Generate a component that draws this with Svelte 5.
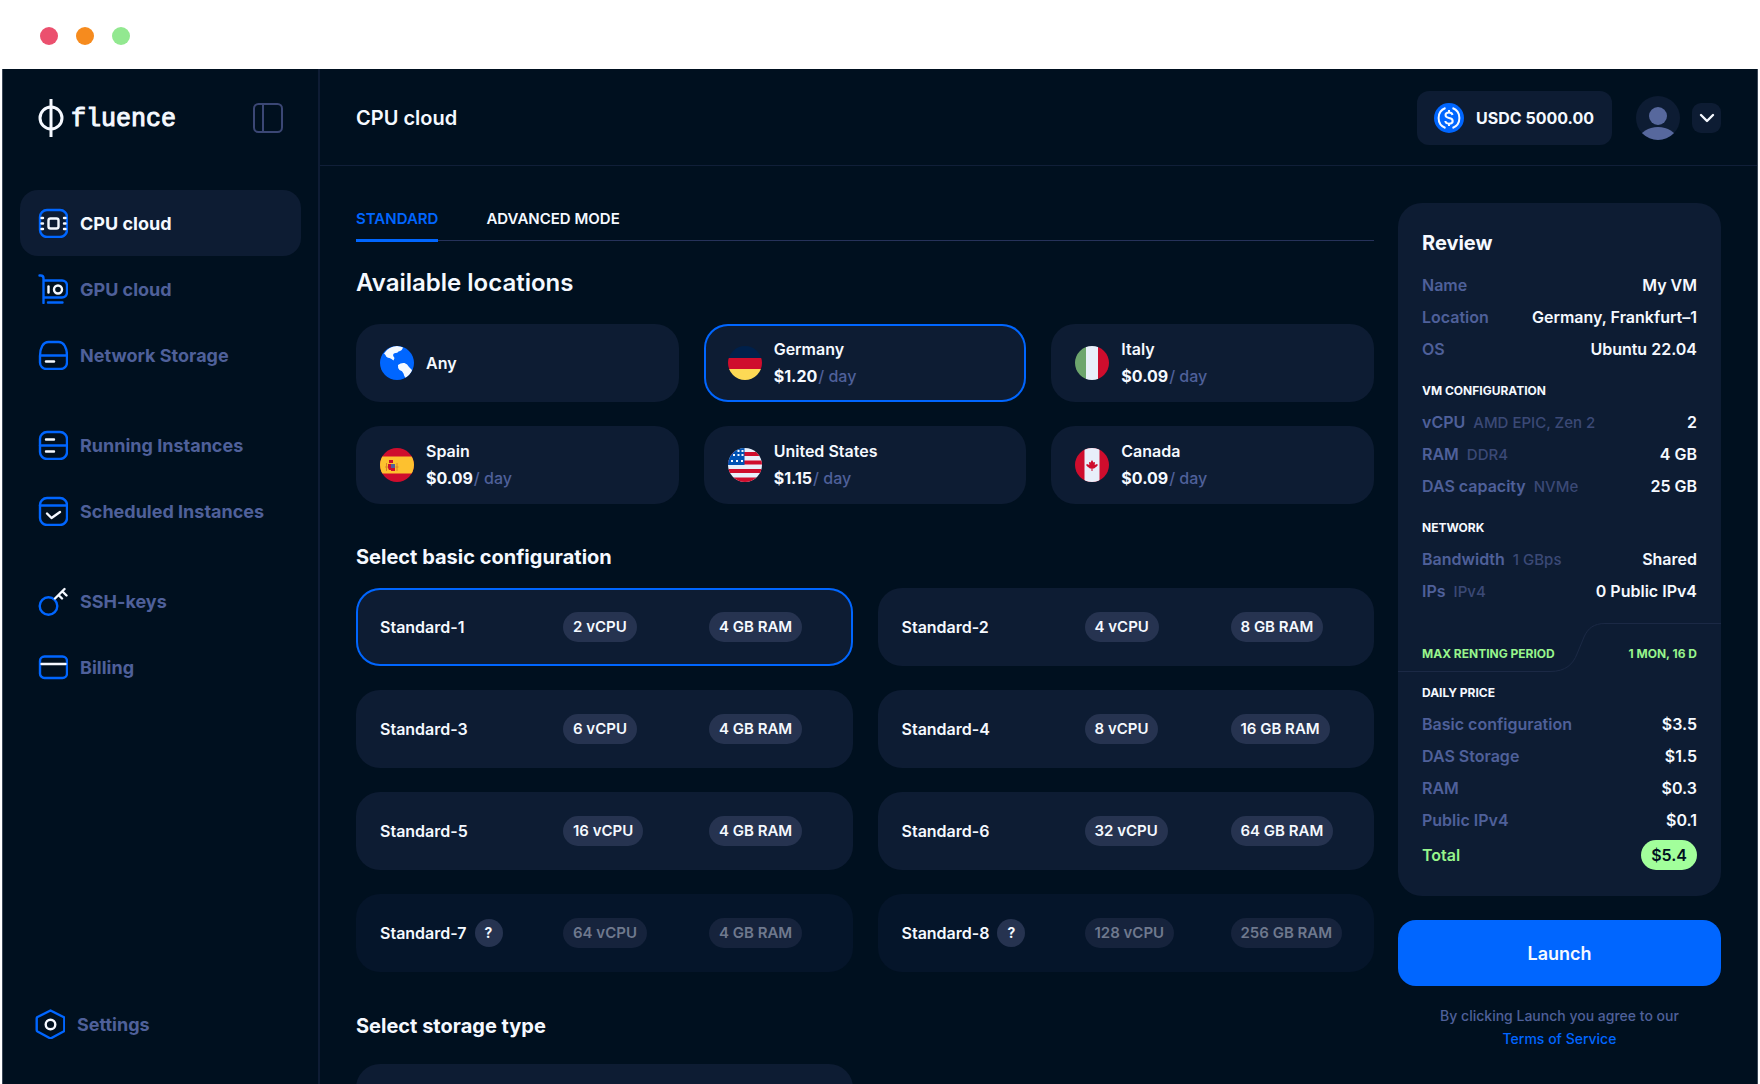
<script>
  const navGroups = [
    [
      { id: "cpu", label: "CPU cloud" },
      { id: "gpu", label: "GPU cloud" },
      { id: "storage", label: "Network Storage" }
    ],
    [
      { id: "running", label: "Running Instances" },
      { id: "scheduled", label: "Scheduled Instances" }
    ],
    [
      { id: "ssh", label: "SSH-keys" },
      { id: "billing", label: "Billing" }
    ]
  ];

  const tabs = ["STANDARD", "ADVANCED MODE"];

  const locations = [
    { id: "any", name: "Any" },
    { id: "de", name: "Germany", price: "$1.20" },
    { id: "it", name: "Italy", price: "$0.09" },
    { id: "es", name: "Spain", price: "$0.09" },
    { id: "us", name: "United States", price: "$1.15" },
    { id: "ca", name: "Canada", price: "$0.09" }
  ];

  const configs = [
    { name: "Standard-1", cpu: "2 vCPU", ram: "4 GB RAM" },
    { name: "Standard-2", cpu: "4 vCPU", ram: "8 GB RAM" },
    { name: "Standard-3", cpu: "6 vCPU", ram: "4 GB RAM" },
    { name: "Standard-4", cpu: "8 vCPU", ram: "16 GB RAM" },
    { name: "Standard-5", cpu: "16 vCPU", ram: "4 GB RAM" },
    { name: "Standard-6", cpu: "32 vCPU", ram: "64 GB RAM" },
    { name: "Standard-7", cpu: "64 vCPU", ram: "4 GB RAM", disabled: true },
    { name: "Standard-8", cpu: "128 vCPU", ram: "256 GB RAM", disabled: true }
  ];

  const general = [
    { label: "Name", value: "My VM" },
    { label: "Location", value: "Germany, Frankfurt–1" },
    { label: "OS", value: "Ubuntu 22.04" }
  ];

  const vm = [
    { label: "vCPU", note: "AMD EPIC, Zen 2", value: "2" },
    { label: "RAM", note: "DDR4", value: "4 GB" },
    { label: "DAS capacity", note: "NVMe", value: "25 GB" }
  ];

  const network = [
    { label: "Bandwidth", note: "1 GBps", value: "Shared" },
    { label: "IPs", note: "IPv4", value: "0 Public IPv4" }
  ];

  const prices = [
    { label: "Basic configuration", value: "$3.5" },
    { label: "DAS Storage", value: "$1.5" },
    { label: "RAM", value: "$0.3" },
    { label: "Public IPv4", value: "$0.1" }
  ];

  let page = $state("cpu");
  let tab = $state("STANDARD");
  let location = $state("de");
  let config = $state("Standard-1");
</script>

{#snippet navIcon(id)}
  <svg class="nav-icon" viewBox="0 0 30 30" aria-hidden="true">
    {#if id === "cpu"}
      <rect class="b" x="2" y="2" width="27" height="27" rx="7" />
      <rect class="w" x="10.5" y="10.5" width="10" height="10" rx="2" />
      <path class="w" d="M3.5 10H5M3.5 15.5H5M3.5 21H5M26 10h1.5M26 15.5h1.5M26 21h1.5" />
    {:else if id === "gpu"}
      <path class="b" d="M1.5 1.5h1.2a2.8 2.8 0 0 1 2.8 2.8V29M5.5 6.5H24a5 5 0 0 1 5 5v7a5 5 0 0 1-5 5H5.5M10 28.5h14.5" />
      <path class="w" d="M10.5 12.5v6" />
      <circle class="w" cx="20" cy="15.5" r="4" />
    {:else if id === "storage"}
      <path class="b" d="M2 16C2 8 5 2 10.5 2h10C26 2 29 8 29 16v6.5a6.5 6.5 0 0 1-6.5 6.5h-14A6.5 6.5 0 0 1 2 22.5zM2 15.5h27" />
      <path class="w" d="M8 21.5h8" />
    {:else if id === "running"}
      <rect class="b" x="2" y="2" width="27" height="27" rx="7" />
      <path class="b" d="M2 15.5h27" />
      <path class="w" d="M8 9.5h8M8 21.5h8" />
    {:else if id === "scheduled"}
      <rect class="b" x="2" y="2" width="27" height="27" rx="7" />
      <path class="b" d="M2 9.5h27" />
      <path class="w" d="m9 17.5 4.5 4.5 8.5-6" />
    {:else if id === "ssh"}
      <circle class="b" cx="10.5" cy="20" r="8.8" />
      <path class="w" d="M17 12.5 26.5 3M20.5 9l3.5 3.5M24.500 5.5l4 4" />
    {:else if id === "billing"}
      <rect class="b" x="2" y="4.5" width="27" height="21.5" rx="4.5" />
      <path class="w" d="M3.5 12h24" />
    {:else}
      <path class="b" d="M15.5 1.5 28.500 8q.8.5.8 1.5v11.5q0 1-.8 1.5l-13 7-13-7q-.8-.5-.8-1.5V9.5q0-1 .8-1.5z" />
      <circle class="w" cx="15.5" cy="15.5" r="4.8" />
    {/if}
  </svg>
{/snippet}

{#snippet flag(id)}
  <svg class="flag" viewBox="0 0 34 34" aria-hidden="true">
    <clipPath id="round-{id}"><circle cx="17" cy="17" r="17" /></clipPath>
    <g clip-path="url(#round-{id})">
      {#if id === "any"}
        <path fill="#0066ff" d="M0 0h34v34H0z" />
        <path fill="#f5f9ff" d="M4 7.5Q9 0 17 0q4 .3 6 1.500-1 3.500-4.500 4-1 1.500-3 1.500-2 0-2.500 2 .5 2 1.500 3l-1 2.500q-2-2-4-2.500-3.500-.5-4-3zM18 19q3-2.500 6.500-2 3 1 4.500 4l3 3q0 3-6 8.500-2-2-2.500-5-1-3-4-3.500-2-2-1.500-5z" />
      {:else if id === "de"}
        <path fill="#00204a" d="M0 0h34v12H0z" />
        <path fill="#cf0d2d" d="M0 12h34v11H0z" />
        <path fill="#fdd955" d="M0 23h34v11H0z" />
      {:else if id === "it"}
        <path fill="#6da56d" d="M0 0h11v34H0z" />
        <path fill="#e8effa" d="M11 0h12v34H11z" />
        <path fill="#cf0d2d" d="M23 0h11v34H23z" />
      {:else if id === "es"}
        <path fill="#cf0d2d" d="M0 0h34v34H0z" />
        <path fill="#fdc12f" d="M0 8.500h34v17H0z" />
        <path fill="#cf0d2d" d="M9 12h4v3H9zM8 16h3v6H9l-1-2zM11 20h4v3h-4z" />
        <path fill="#54619b" d="M11 16h4v4h-4z" />
        <path stroke="#d9822b" fill="none" d="M6.500 15v8M17 15v8M5 19h3M15.500 19h3" />
      {:else if id === "us"}
        <path fill="#e8effa" d="M0 0h34v34H0z" />
        <path fill="#cf0d2d" d="M0 4h34v4H0zM0 12.500h34v4H0zM0 21h34v4H0zM0 29.500h34V34H0z" />
        <path fill="#0052b4" d="M0 0h16.500v17H0z" />
        <path fill="#f5f9ff" d="M5 6h2v2H5zM9.500 6h2v2h-2zM13.500 6h2v2h-2zM9.500 2h2v2h-2zM13.500 2h2v2h-2zM3 12h2v2H3zM8 12h2v2H8zM13 12h2v2h-2z" />
      {:else if id === "ca"}
        <path fill="#cf0d2d" d="M0 0h34v34H0z" />
        <path fill="#e8effa" d="M9.500 0h15v34h-15z" />
        <path fill="#cf0d2d" d="m17 12 1.500 2.500 1.500-.5-.3 3 2.300-1 .8.800-.5 1.200-3.300 2.500H17.500V23h-1v-2.500H15L11.700 18l-.5-1.200.8-.8 2.300 1-.3-3 1.500.5z" />
      {/if}
    </g>
  </svg>
{/snippet}

{#snippet rows(items)}
  <dl>
    {#each items as item}
      <div class="row">
        <dt>{item.label}{#if item.note}<span class="note">{item.note}</span>{/if}</dt>
        <dd>{item.value}</dd>
      </div>
    {/each}
  </dl>
{/snippet}

<div class="window">
  <div class="titlebar">
    <span class="dot red"></span>
    <span class="dot orange"></span>
    <span class="dot green"></span>
  </div>

  <div class="app">
    <aside>
      <div class="brand">
        <a class="logo" href="#home">
          <svg viewBox="0 0 26 38" aria-hidden="true">
            <circle cx="13" cy="19" r="11" />
            <path d="M13 0v38" />
          </svg>
          <span>fluence</span>
        </a>
        <button class="collapse" aria-label="Toggle sidebar">
          <svg viewBox="0 0 30 30" aria-hidden="true">
            <rect x="1" y="1" width="28" height="28" rx="4.5" />
            <path d="M10 1v28" />
          </svg>
        </button>
      </div>

      <nav>
        {#each navGroups as group}
          <ul>
            {#each group as item}
              <li>
                <a
                  class="nav-item"
                  class:active={page === item.id}
                  href="#{item.id}"
                  onclick={() => (page = item.id)}
                >
                  {@render navIcon(item.id)}
                  {item.label}
                </a>
              </li>
            {/each}
          </ul>
        {/each}
      </nav>

      <a class="nav-item settings" href="#settings">
        {@render navIcon("settings")}
        Settings
      </a>
    </aside>

    <div class="page">
      <header>
        <h1>CPU cloud</h1>
        <div class="balance">
          <svg viewBox="0 0 30 30" aria-hidden="true">
            <circle cx="15" cy="15" r="15" fill="#0066ff" />
            <path d="M11.5 5A10.7 10.7 0 0 0 11.5 25M18.5 5A10.7 10.7 0 0 1 18.5 25" />
            <path d="M18.5 12Q18 9.5 15 9.5q-3.5 0-3.500 2.600 0 2.200 3.500 2.800 3.700.6 3.700 3 0 2.800-3.700 2.800-3.400 0-3.700-2.700M15 7v2.500M15 20.500V23" />
          </svg>
          <span>USDC 5000.00</span>
        </div>
        <svg class="avatar" viewBox="0 0 44 44" aria-hidden="true">
          <clipPath id="avatar-clip"><circle cx="22" cy="22" r="22" /></clipPath>
          <circle cx="22" cy="22" r="22" fill="#0d1c33" />
          <circle cx="22" cy="20" r="9" fill="#57689d" />
          <ellipse cx="22" cy="43" rx="18" ry="12" fill="#57689d" clip-path="url(#avatar-clip)" />
        </svg>
        <button class="menu" aria-label="Account menu">
          <svg viewBox="0 0 16 16" aria-hidden="true"><path d="m2 5 6 6 6-6" /></svg>
        </button>
      </header>

      <div class="content">
        <main>
          <div class="tabs">
            {#each tabs as name}
              <button class:active={tab === name} onclick={() => (tab = name)}>{name}</button>
            {/each}
          </div>

          <h2>Available locations</h2>
          <div class="locations">
            {#each locations as item}
              <button
                class="card"
                class:selected={location === item.id}
                onclick={() => (location = item.id)}
              >
                {@render flag(item.id)}
                <span class="place">
                  <span>{item.name}</span>
                  {#if item.price}
                    <span class="price"><b>{item.price}</b>/ day</span>
                  {/if}
                </span>
              </button>
            {/each}
          </div>

          <h3>Select basic configuration</h3>
          <div class="configs">
            {#each configs as item}
              <button
                class="card config"
                class:selected={config === item.name}
                disabled={item.disabled}
                onclick={() => (config = item.name)}
              >
                <span class="name">
                  {item.name}
                  {#if item.disabled}<span class="help">?</span>{/if}
                </span>
                <span><span class="pill">{item.cpu}</span></span>
                <span><span class="pill">{item.ram}</span></span>
              </button>
            {/each}
          </div>

          <h3>Select storage type</h3>
          <div class="configs storage">
            <div class="card"></div>
          </div>
        </main>

        <section class="side">
          <div class="review">
            <h3>Review</h3>
            {@render rows(general)}
            <h4>VM CONFIGURATION</h4>
            {@render rows(vm)}
            <h4>NETWORK</h4>
            {@render rows(network)}

            <div class="period">
              <svg viewBox="0 0 323 50" preserveAspectRatio="none" aria-hidden="true">
                <path d="M0 48.5H152C168 48.5 175 41 179 31L186 14C190 5 196 .5 207 .5H323" />
              </svg>
              <span>MAX RENTING PERIOD</span>
              <span>1 MON, 16 D</span>
            </div>

            <h4 class="daily">DAILY PRICE</h4>
            {@render rows(prices)}
            <div class="total">
              <span>Total</span>
              <span class="sum">$5.4</span>
            </div>
          </div>

          <button class="launch">Launch</button>
          <p class="terms">
            By clicking Launch you agree to our<br />
            <a href="#terms">Terms of Service</a>
          </p>
        </section>
      </div>
    </div>
  </div>
</div>

<style>
  :global(body) {
    margin: 0;
    background: #fff;
    font-family: Inter, "Open Sans", sans-serif;
    font-weight: 600;
    color: #f5f9ff;
  }

  .window,
  .window :global(*) {
    box-sizing: border-box;
  }

  .window {
    height: 100vh;
    display: flex;
    flex-direction: column;
    overflow: hidden;
  }

  button {
    border: none;
    padding: 0;
    background: none;
    color: inherit;
    font: inherit;
    cursor: pointer;
  }

  a {
    color: inherit;
    text-decoration: none;
  }

  h1,
  h2,
  h3,
  h4,
  p,
  ul,
  dl,
  dd {
    margin: 0;
    padding: 0;
    font-weight: 600;
  }

  svg {
    display: block;
    flex: none;
    fill: none;
  }

  .titlebar {
    flex: none;
    height: 69px;
    display: flex;
    align-items: center;
    gap: 18px;
    padding: 2px 40px 0;
  }

  .dot {
    width: 18px;
    height: 18px;
    border-radius: 50%;
  }

  .red {
    background: #eb506e;
  }

  .orange {
    background: #f68b1e;
  }

  .green {
    background: #92e890;
  }

  .app {
    flex: 1;
    min-height: 0;
    display: flex;
    margin: 0 2px;
    border: solid #3c4858;
    border-width: 0 1px;
    background: #00101f;
  }

  /* sidebar */
  aside {
    flex: none;
    width: 317px;
    display: flex;
    flex-direction: column;
    padding: 0 17px 27px;
    border-right: 2px solid #0e1c34;
  }

  .brand {
    height: 97px;
    display: flex;
    align-items: center;
    justify-content: space-between;
    padding: 0 18px;
  }

  .logo {
    display: flex;
    align-items: center;
    gap: 7px;
    font: 25px/30px "Liberation Mono", monospace;
    -webkit-text-stroke: 1px #f5f9ff;
  }

  .logo span {
    padding-top: 4px;
  }

  .logo svg {
    width: 26px;
    height: 38px;
    stroke: #f5f9ff;
    stroke-width: 3;
  }

  .collapse svg {
    width: 30px;
    height: 30px;
    stroke: #3b4775;
    stroke-width: 2;
  }

  nav {
    flex: 1;
    padding-top: 24px;
  }

  ul {
    list-style: none;
    margin-bottom: 24px;
  }

  .nav-item {
    height: 66px;
    display: flex;
    align-items: center;
    gap: 12px;
    padding: 0 18px;
    border-radius: 18px;
    font-size: 18px;
    font-weight: 700;
    color: #4f609a;
  }

  .nav-item.active {
    background: #0d1c33;
    color: #f5f9ff;
  }

  .settings {
    padding-left: 15px;
  }

  .nav-icon {
    width: 30px;
    height: 30px;
    stroke-width: 2.4;
    stroke-linecap: round;
    stroke-linejoin: round;
  }

  .b {
    stroke: #0066ff;
  }

  .w {
    stroke: #f5f9ff;
  }

  /* header */
  .page {
    flex: 1;
    min-width: 0;
    display: flex;
    flex-direction: column;
  }

  header {
    flex: none;
    height: 97px;
    display: flex;
    align-items: center;
    padding: 2px 36px 0;
    border-bottom: 1px solid #101f38;
  }

  h1 {
    flex: 1;
    font-size: 20px;
  }

  .balance {
    height: 54px;
    display: flex;
    align-items: center;
    gap: 12px;
    margin-right: 24px;
    padding: 0 18px 0 17px;
    border-radius: 12px;
    background: #0d1c33;
    font-size: 16px;
    font-weight: 700;
  }

  .balance svg {
    width: 30px;
    height: 30px;
    stroke: #f5f9ff;
    stroke-width: 2;
  }

  .balance circle {
    stroke: none;
  }

  .avatar {
    width: 44px;
    height: 44px;
    margin-right: 12px;
  }

  .menu {
    width: 29px;
    height: 30px;
    display: grid;
    place-items: center;
    border-radius: 9px;
    background: #0d1c33;
  }

  .menu svg {
    width: 16px;
    height: 16px;
    stroke: #f5f9ff;
    stroke-width: 2.4;
    stroke-linecap: round;
    stroke-linejoin: round;
  }

  /* content */
  .content {
    flex: 1;
    min-height: 0;
    display: flex;
    gap: 24px;
    padding: 37px 36px 0;
    overflow: hidden;
  }

  main {
    flex: 1;
    min-width: 0;
  }

  .tabs {
    display: flex;
    gap: 48px;
    height: 38px;
    border-bottom: 1px solid #26325a;
    font-size: 15px;
  }

  .tabs button {
    margin-bottom: -2px;
    padding-bottom: 6px;
    border-bottom: 3px solid transparent;
  }

  .tabs button.active {
    border-color: #0066ff;
    color: #0066ff;
  }

  h2 {
    margin: 26px 0 25px;
    font-size: 24px;
    line-height: 32px;
  }

  h3 {
    font-size: 20px;
    font-weight: 700;
    line-height: 28px;
  }

  .locations {
    display: grid;
    grid-template-columns: repeat(3, 1fr);
    gap: 24px 25px;
    margin-bottom: 39px;
  }

  .card {
    min-height: 78px;
    display: flex;
    align-items: center;
    padding: 0 24px;
    border-radius: 24px;
    background: #0d1c33;
    font-size: 16px;
    text-align: left;
  }

  .card.selected {
    box-shadow: inset 0 0 0 2px #0066ff;
  }

  .flag {
    width: 34px;
    height: 34px;
    margin-right: 12px;
  }

  .place {
    display: flex;
    flex-direction: column;
    line-height: 27px;
  }

  .price {
    color: #4f609a;
    font-weight: 500;
  }

  .price b {
    margin-right: 1px;
    font-weight: 700;
    color: #f5f9ff;
  }

  .configs {
    display: grid;
    grid-template-columns: repeat(2, 1fr);
    gap: 24px 25px;
    margin: 17px 0 40px;
  }

  .storage {
    margin-top: 24px;
  }

  .config {
    display: grid;
    grid-template-columns: 183px 146px 1fr;
  }

  .name {
    display: flex;
    align-items: center;
    gap: 8px;
  }

  .pill {
    display: inline-block;
    padding: 0 10px;
    border-radius: 15px;
    background: #263350;
    font-size: 15px;
    line-height: 30px;
  }

  .help {
    width: 28px;
    border-radius: 50%;
    background: #263350;
    font-size: 14px;
    font-weight: 700;
    line-height: 28px;
    text-align: center;
  }

  .config:disabled {
    background: #05152a;
    color: #f5f9ff;
  }

  .config:disabled .pill {
    background: #16233c;
    color: #6f798e;
  }

  /* review */
  .side {
    flex: none;
    width: 323px;
  }

  .review {
    padding: 26px 24px;
    border-radius: 24px;
    background: #0d1c33;
    font-size: 16px;
  }

  .review h3 {
    margin-bottom: 12px;
  }

  .row {
    height: 32px;
    display: flex;
    justify-content: space-between;
    line-height: 32px;
  }

  dt {
    color: #4f609a;
  }

  .note {
    margin-left: 8px;
    font-size: 15px;
    font-weight: 500;
    color: #3b4976;
  }

  h4 {
    margin-top: 15px;
    font-size: 12px;
    font-weight: 700;
    line-height: 22px;
  }

  h4 + dl {
    margin-top: 4px;
  }

  .period {
    position: relative;
    height: 50px;
    display: flex;
    align-items: center;
    justify-content: space-between;
    margin: 16px -24px 0;
    padding: 10px 24px 0;
    font-size: 12px;
    font-weight: 700;
    color: #97f58c;
  }

  .period svg {
    position: absolute;
    inset: 0;
    width: 100%;
    height: 100%;
    stroke: #1b2945;
  }

  .review .daily {
    margin-top: 9px;
  }

  .total {
    display: flex;
    align-items: center;
    justify-content: space-between;
    margin-top: 4px;
    color: #97f58c;
  }

  .sum {
    padding: 0 10px;
    border-radius: 15px;
    background: #a2ff9b;
    color: #00101f;
    line-height: 30px;
  }

  .launch {
    width: 100%;
    height: 66px;
    margin-top: 24px;
    border-radius: 18px;
    background: #0066ff;
    font-size: 18px;
  }

  .terms {
    margin-top: 18px;
    font-size: 14px;
    font-weight: 500;
    line-height: 23px;
    text-align: center;
    color: #4f609a;
  }

  .terms a {
    color: #0066ff;
  }
</style>
